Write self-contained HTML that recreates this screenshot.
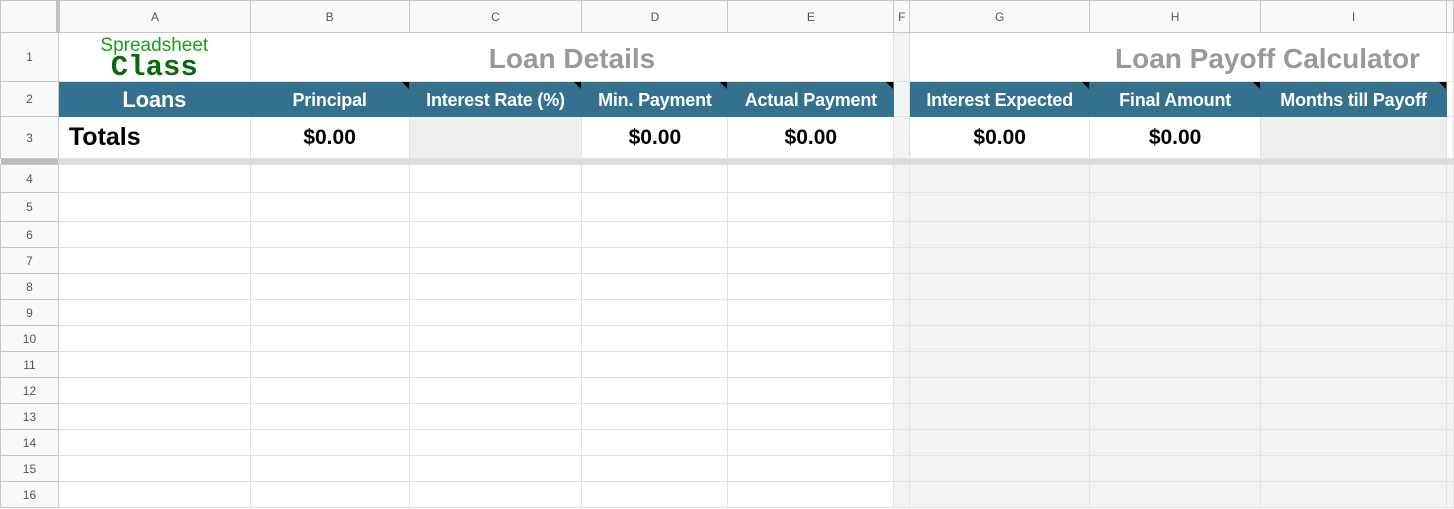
<!DOCTYPE html>
<html><head><meta charset="utf-8"><style>
body{margin:0;width:1454px;height:509px;overflow:hidden;background:#fff;font-family:"Liberation Sans",Arial,sans-serif}
table{border-collapse:collapse;table-layout:fixed;position:absolute;left:0;top:0}
td{border:1px solid #e2e2e2;padding:0;text-align:center;overflow:hidden;white-space:nowrap}
tr.ch td{background:#f8f9fa;border-color:#c7c7c7;color:#555;font-size:12px;height:31px}
td.rh{background:#f8f9fa;border-color:#c7c7c7;color:#555;font-size:12px}
td.f{background:#f3f3f3}
tr.g td.gy{background:#f3f3f3}
tr.h td.hd{background:#34718f;color:#fff;font-weight:bold;font-size:18px;position:relative;border-color:#34718f;letter-spacing:-0.2px;padding-top:2px}
td.hd.tri:after{content:"";position:absolute;right:0;top:0;border-style:solid;border-width:0 7px 7px 0;border-color:transparent #000 transparent transparent}
tr.t td{font-weight:bold;font-size:21px}
.fr td{height:5px;background:#dadce0;border:none}
.fr td.rh{background:#bdbdbd}
</style></head><body>
<table>
<colgroup><col style="width:58px"><col style="width:192px"><col style="width:159px"><col style="width:173px"><col style="width:146px"><col style="width:166px"><col style="width:16px"><col style="width:180px"><col style="width:171px"><col style="width:186px"><col style="width:7px"></colgroup>
<tr class="ch"><td style="border-right:4px solid #c0c0c0"></td><td>A</td><td>B</td><td>C</td><td>D</td><td>E</td><td>F</td><td>G</td><td>H</td><td>I</td><td></td></tr>
<tr style="height:49px"><td class="rh">1</td>
<td style="padding-top:1px"><div style="color:#1a9d1a;font-size:19px;line-height:20px">Spreadsheet</div><div style="color:#0a6a0a;font-family:'Liberation Mono',monospace;font-weight:bold;font-size:29px;line-height:24px">Class</div></td>
<td colspan="4" style="color:#999;font-weight:bold;font-size:28px;padding-top:4px">Loan Details</td>
<td class="f"></td>
<td colspan="3" style="color:#999;font-weight:bold;font-size:28px;text-align:right;padding-right:26px;padding-top:4px">Loan Payoff Calculator</td><td></td></tr>
<tr class="h" style="height:35px"><td class="rh">2</td><td class="hd" style="font-size:22px">Loans</td><td class="hd tri">Principal</td><td class="hd tri">Interest Rate (%)</td><td class="hd tri">Min. Payment</td><td class="hd tri">Actual Payment</td><td class="f"></td><td class="hd tri">Interest Expected</td><td class="hd tri">Final Amount</td><td class="hd tri">Months till Payoff</td><td></td></tr>
<tr class="t" style="height:42px"><td class="rh" style="font-weight:normal;font-size:12px">3</td><td style="text-align:left;padding-left:10px;font-size:25px">Totals</td><td>$0.00</td><td style="background:#efefef"></td><td>$0.00</td><td>$0.00</td><td class="f"></td><td>$0.00</td><td>$0.00</td><td style="background:#efefef"></td><td></td></tr>
<tr class="fr"><td class="rh"></td><td></td><td></td><td></td><td></td><td></td><td></td><td></td><td></td><td></td><td></td></tr>
<tr class="g" style="height:28px"><td class="rh">4</td><td></td><td></td><td></td><td></td><td></td><td class="gy"></td><td class="gy"></td><td class="gy"></td><td class="gy"></td><td class="gy"></td></tr>
<tr class="g" style="height:29px"><td class="rh">5</td><td></td><td></td><td></td><td></td><td></td><td class="gy"></td><td class="gy"></td><td class="gy"></td><td class="gy"></td><td class="gy"></td></tr>
<tr class="g" style="height:26px"><td class="rh">6</td><td></td><td></td><td></td><td></td><td></td><td class="gy"></td><td class="gy"></td><td class="gy"></td><td class="gy"></td><td class="gy"></td></tr>
<tr class="g" style="height:26px"><td class="rh">7</td><td></td><td></td><td></td><td></td><td></td><td class="gy"></td><td class="gy"></td><td class="gy"></td><td class="gy"></td><td class="gy"></td></tr>
<tr class="g" style="height:26px"><td class="rh">8</td><td></td><td></td><td></td><td></td><td></td><td class="gy"></td><td class="gy"></td><td class="gy"></td><td class="gy"></td><td class="gy"></td></tr>
<tr class="g" style="height:26px"><td class="rh">9</td><td></td><td></td><td></td><td></td><td></td><td class="gy"></td><td class="gy"></td><td class="gy"></td><td class="gy"></td><td class="gy"></td></tr>
<tr class="g" style="height:26px"><td class="rh">10</td><td></td><td></td><td></td><td></td><td></td><td class="gy"></td><td class="gy"></td><td class="gy"></td><td class="gy"></td><td class="gy"></td></tr>
<tr class="g" style="height:26px"><td class="rh">11</td><td></td><td></td><td></td><td></td><td></td><td class="gy"></td><td class="gy"></td><td class="gy"></td><td class="gy"></td><td class="gy"></td></tr>
<tr class="g" style="height:26px"><td class="rh">12</td><td></td><td></td><td></td><td></td><td></td><td class="gy"></td><td class="gy"></td><td class="gy"></td><td class="gy"></td><td class="gy"></td></tr>
<tr class="g" style="height:26px"><td class="rh">13</td><td></td><td></td><td></td><td></td><td></td><td class="gy"></td><td class="gy"></td><td class="gy"></td><td class="gy"></td><td class="gy"></td></tr>
<tr class="g" style="height:26px"><td class="rh">14</td><td></td><td></td><td></td><td></td><td></td><td class="gy"></td><td class="gy"></td><td class="gy"></td><td class="gy"></td><td class="gy"></td></tr>
<tr class="g" style="height:26px"><td class="rh">15</td><td></td><td></td><td></td><td></td><td></td><td class="gy"></td><td class="gy"></td><td class="gy"></td><td class="gy"></td><td class="gy"></td></tr>
<tr class="g" style="height:26px"><td class="rh">16</td><td></td><td></td><td></td><td></td><td></td><td class="gy"></td><td class="gy"></td><td class="gy"></td><td class="gy"></td><td class="gy"></td></tr>
</table>
</body></html>
